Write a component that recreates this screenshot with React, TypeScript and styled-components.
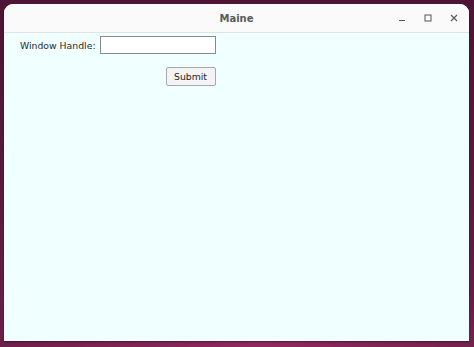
import React from 'react';
import styled, { createGlobalStyle } from 'styled-components';

const GlobalStyle = createGlobalStyle`
  html, body {
    margin: 0;
    padding: 0;
  }
  body {
    font-family: "DejaVu Sans", "Noto Sans", sans-serif;
  }
`;

// --------------- Desktop + window frame

const Desktop = styled.div`
  width: 474px;
  height: 347px;
  box-sizing: border-box;
  padding: 4px 5px 6px 4px;
  display: flex;
  background: radial-gradient(ellipse 60% 20% at 55% 100%, #8e2a5e 0%, rgba(142, 42, 94, 0) 100%),
    linear-gradient(180deg, #4e1434 0%, #5a1a3e 60%, #6a1f48 100%);
`;

const Window = styled.div`
  flex: 1;
  display: flex;
  flex-direction: column;
  border-radius: 9px 9px 0 0;
  overflow: hidden;
  background: #f0ffff;
  box-shadow: 0 1px 2px rgba(0, 0, 0, 0.4);
`;

const TitleBar = styled.header`
  height: 28px;
  flex: 0 0 auto;
  display: flex;
  align-items: center;
  justify-content: center;
  position: relative;
  background: #fafafa;
  border-bottom: 1px solid #e2e2e2;
`;

const Title = styled.span`
  font-family: "DejaVu Sans", sans-serif;
  font-weight: bold;
  font-size: 10px;
  color: #5a5a5a;
`;

const Controls = styled.div`
  position: absolute;
  right: 7px;
  top: 0;
  height: 100%;
  display: flex;
  align-items: center;
  gap: 10px;
`;

const ControlButton = styled.span`
  width: 16px;
  height: 16px;
  display: flex;
  align-items: center;
  justify-content: center;
  color: #555;
`;

// --------------- Form

const Content = styled.main`
  flex: 1;
  padding: 3px 0 0 16px;
`;

const Form = styled.form`
  display: grid;
  justify-content: start;
  grid-template-columns: auto auto;
  column-gap: 4px;
  row-gap: 13px;
  align-items: center;
  margin: 0;
`;

const Label = styled.label`
  font-size: 9.3px;
  color: #2a2a2a;
  justify-self: end;
`;

const TextInput = styled.input`
  width: 116px;
  height: 18px;
  box-sizing: border-box;
  border: 1px solid #8a8a8a;
  background: #fff;
  margin: 0;
  padding: 0 3px;
  font-size: 9px;
`;

const SubmitButton = styled.button`
  grid-column: 2;
  justify-self: end;
  width: 50px;
  height: 19px;
  box-sizing: border-box;
  margin: 0;
  padding: 0;
  border: 1px solid #a8a8a8;
  border-radius: 2px;
  background: #f4f4f4;
  font-family: "DejaVu Sans", sans-serif;
  font-size: 9.3px;
  color: #222;
`;

const App = (): JSX.Element => (
  <>
    <GlobalStyle />
    <Desktop>
      <Window>
        <TitleBar>
          <Title>Maine</Title>
          <Controls>
            <ControlButton>
              <svg width="8" height="8" viewBox="0 0 8 8">
                <path d="M1 6.5h6" stroke="#555" strokeWidth="1" />
              </svg>
            </ControlButton>
            <ControlButton>
              <svg width="8" height="8" viewBox="0 0 8 8">
                <rect x="1" y="1" width="6" height="6" fill="none" stroke="#555" strokeWidth="1" />
              </svg>
            </ControlButton>
            <ControlButton>
              <svg width="8" height="8" viewBox="0 0 8 8">
                <path d="M1 1l6 6M7 1l-6 6" stroke="#555" strokeWidth="1.1" />
              </svg>
            </ControlButton>
          </Controls>
        </TitleBar>
        <Content>
          <Form onSubmit={(e) => e.preventDefault()}>
            <Label htmlFor="handle">Window Handle:</Label>
            <TextInput id="handle" type="text" />
            <SubmitButton type="submit">Submit</SubmitButton>
          </Form>
        </Content>
      </Window>
    </Desktop>
  </>
);

export default App;
